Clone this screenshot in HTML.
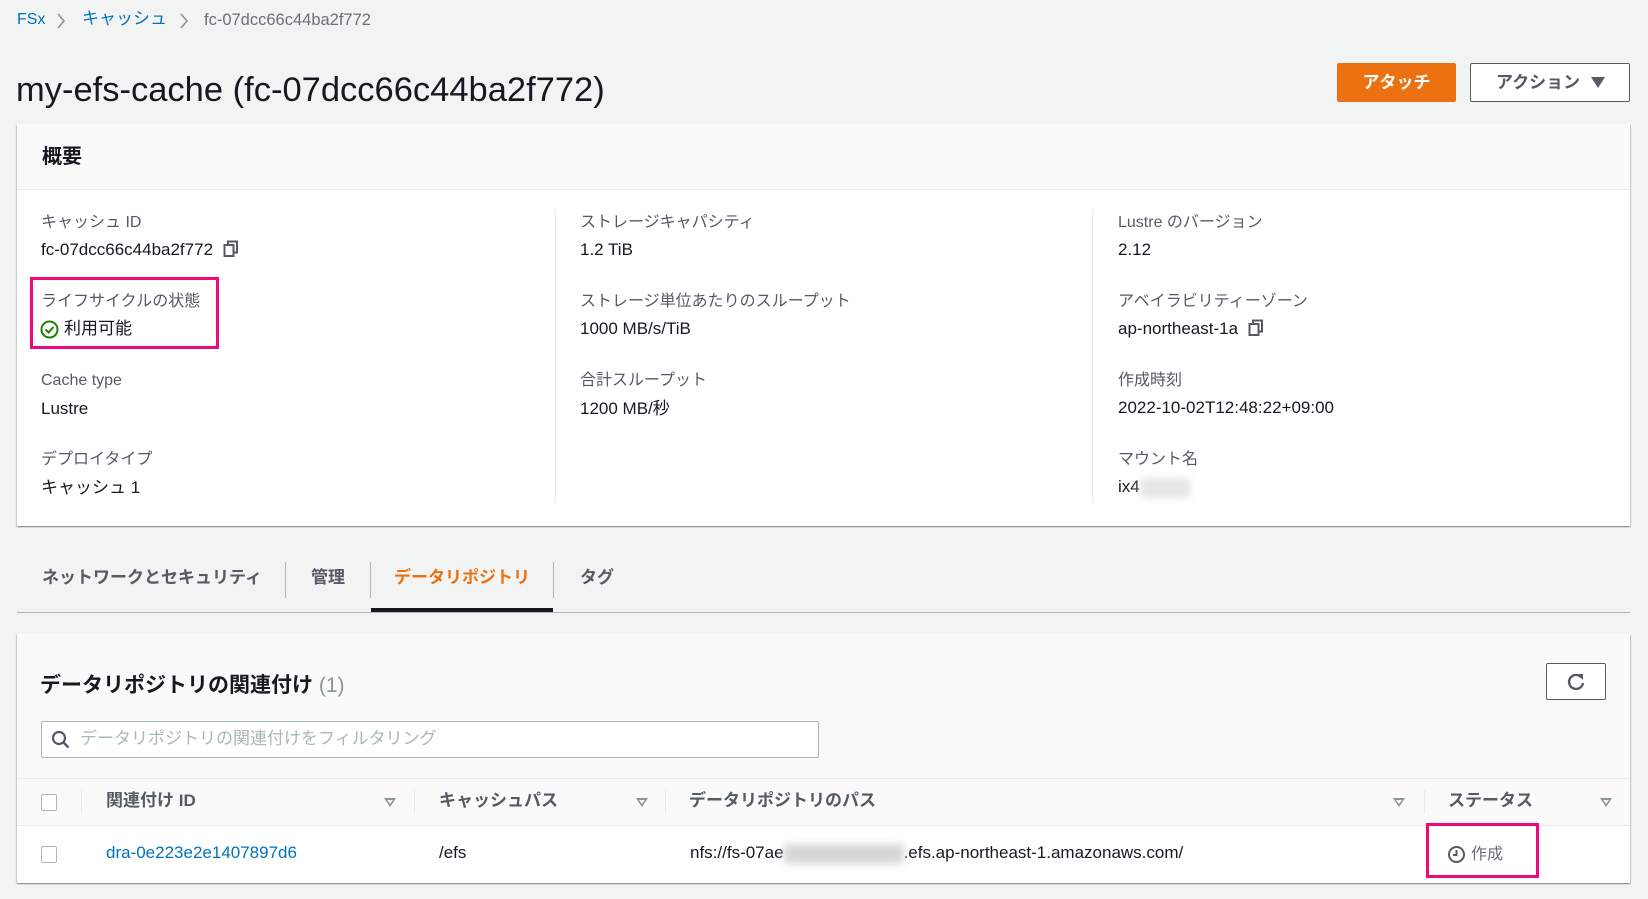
<!DOCTYPE html>
<html><head><meta charset="utf-8"><style>
*{box-sizing:border-box;margin:0;padding:0}
body{width:1648px;height:899px;background:#f2f3f3;font-family:"Liberation Sans","Noto Sans CJK JP",sans-serif;color:#16191f;position:relative;overflow:hidden;font-size:16px}
.a{position:absolute;white-space:nowrap;line-height:22px}
.lbl{color:#545b64;font-size:16px}
.val{color:#16191f;font-size:17px}
.link{color:#0073bb}
.vd{position:absolute;width:1px;background:#eaeded}
.blur{display:inline-block;vertical-align:middle;background:#d5d8d8;filter:blur(4px);border-radius:4px}
.cb{position:absolute;width:16px;height:17px;border:1.5px solid #aab7b8;border-radius:2px;background:#fff}
.th{font-weight:bold;color:#545b64;font-size:17px}
.sort{position:absolute;width:0;height:0;border-left:6px solid transparent;border-right:6px solid transparent;border-top:9px solid #879596}
.sort::after{content:"";position:absolute;left:-3px;top:-7px;border-left:3px solid transparent;border-right:3px solid transparent;border-top:4px solid #fafafa}
.cp{display:inline-block;vertical-align:-3px;margin-left:10px}
</style></head><body>
<div class="a link" style="left:17px;top:9px;font-size:16px">FSx</div>
<svg class="a" style="left:55px;top:12px" width="12" height="18"><path d="M3 2l6 7-6 7" stroke="#879596" stroke-width="1.6" fill="none"/></svg>
<div class="a link" style="left:82px;top:8px;font-size:17px">キャッシュ</div>
<svg class="a" style="left:178px;top:12px" width="12" height="18"><path d="M3 2l6 7-6 7" stroke="#879596" stroke-width="1.6" fill="none"/></svg>
<div class="a" style="left:204px;top:9px;font-size:16.5px;color:#687078">fc-07dcc66c44ba2f772</div>

<div class="a" style="left:16px;top:70px;font-size:34.5px;line-height:40px;color:#16191f">my-efs-cache (fc-07dcc66c44ba2f772)</div>
<div class="a" style="left:1337px;top:63px;width:119px;height:39px;background:#ec7211;border-radius:2px;color:#fff;font-weight:bold;font-size:17px;text-align:center;line-height:39px">アタッチ</div>
<div class="a" style="left:1470px;top:63px;width:160px;height:39px;background:#fff;border:1px solid #545b64;border-radius:2px;color:#545b64;font-weight:bold;font-size:17px;line-height:37px;padding-left:25px">アクション <svg style="margin-left:6px;vertical-align:0" width="14" height="11"><path d="M0 0h14L7 11z" fill="#545b64"/></svg></div>

<!-- overview -->
<div class="a" style="left:17px;top:124px;width:1613px;height:402px;background:#fff;box-shadow:0 1px 1px rgba(0,28,36,.3),1px 1px 1px rgba(0,28,36,.15),-1px 1px 1px rgba(0,28,36,.15)"></div>
<div class="a" style="left:17px;top:124px;width:1613px;height:66px;background:#fafafa;border-bottom:1px solid #eaeded"></div>
<div class="a" style="left:42px;top:146px;font-size:20px;font-weight:bold">概要</div>
<div class="vd" style="left:555px;top:210px;height:292px"></div>
<div class="vd" style="left:1092px;top:210px;height:292px"></div>

<div class="a lbl" style="left:41px;top:212px">キャッシュ ID</div>
<div class="a val" style="left:41px;top:239px">fc-07dcc66c44ba2f772<svg class="cp" width="16" height="18"><rect x="5" y="1.5" width="9" height="11" fill="none" stroke="#545b64" stroke-width="2"/><rect x="1.5" y="5" width="9" height="11" fill="#fff" stroke="#545b64" stroke-width="2"/></svg></div>
<div class="a" style="left:30px;top:277px;width:189px;height:72px;border:3px solid #f0097a"></div>
<div class="a lbl" style="left:41px;top:291px">ライフサイクルの状態</div>
<svg class="a" style="left:40px;top:320px" width="19" height="19"><circle cx="9.5" cy="9.5" r="8" fill="none" stroke="#1d8102" stroke-width="2"/><path d="M5.5 9.5l3 3 5-5.5" fill="none" stroke="#1d8102" stroke-width="2"/></svg>
<div class="a val" style="left:64px;top:318px">利用可能</div>
<div class="a lbl" style="left:41px;top:370px">Cache type</div>
<div class="a val" style="left:41px;top:398px">Lustre</div>
<div class="a lbl" style="left:41px;top:449px">デプロイタイプ</div>
<div class="a val" style="left:41px;top:477px">キャッシュ 1</div>

<div class="a lbl" style="left:580px;top:212px">ストレージキャパシティ</div>
<div class="a val" style="left:580px;top:239px">1.2 TiB</div>
<div class="a lbl" style="left:580px;top:291px">ストレージ単位あたりのスループット</div>
<div class="a val" style="left:580px;top:318px">1000 MB/s/TiB</div>
<div class="a lbl" style="left:580px;top:370px">合計スループット</div>
<div class="a val" style="left:580px;top:398px">1200 MB/秒</div>

<div class="a lbl" style="left:1118px;top:212px">Lustre のバージョン</div>
<div class="a val" style="left:1118px;top:239px">2.12</div>
<div class="a lbl" style="left:1118px;top:291px">アベイラビリティーゾーン</div>
<div class="a val" style="left:1118px;top:318px">ap-northeast-1a<svg class="cp" width="16" height="18"><rect x="5" y="1.5" width="9" height="11" fill="none" stroke="#545b64" stroke-width="2"/><rect x="1.5" y="5" width="9" height="11" fill="#fff" stroke="#545b64" stroke-width="2"/></svg></div>
<div class="a lbl" style="left:1118px;top:370px">作成時刻</div>
<div class="a val" style="left:1118px;top:397px">2022-10-02T12:48:22+09:00</div>
<div class="a lbl" style="left:1118px;top:449px">マウント名</div>
<div class="a val" style="left:1118px;top:476px">ix4<span class="blur" style="width:50px;height:20px;background:#e4e6e6"></span></div>

<!-- tabs -->
<div class="a" style="left:42px;top:567px;font-size:17px;font-weight:bold;color:#545b64">ネットワークとセキュリティ</div>
<div class="vd" style="left:285px;top:562px;height:36px;background:#aab7b8"></div>
<div class="a" style="left:311px;top:567px;font-size:17px;font-weight:bold;color:#545b64">管理</div>
<div class="vd" style="left:370px;top:562px;height:36px;background:#aab7b8"></div>
<div class="a" style="left:394px;top:567px;font-size:17px;font-weight:bold;color:#ec7211">データリポジトリ</div>
<div class="vd" style="left:553px;top:562px;height:36px;background:#aab7b8"></div>
<div class="a" style="left:580px;top:567px;font-size:17px;font-weight:bold;color:#545b64">タグ</div>
<div class="a" style="left:17px;top:612px;width:1613px;height:1px;background:#aab7b8"></div>
<div class="a" style="left:371px;top:608px;width:182px;height:4px;background:#16191f"></div>

<!-- second panel -->
<div class="a" style="left:17px;top:634px;width:1613px;height:249px;background:#fafafa;box-shadow:0 1px 1px rgba(0,28,36,.3),1px 1px 1px rgba(0,28,36,.15),-1px 1px 1px rgba(0,28,36,.15)"></div>
<div class="a" style="left:40px;top:672px;font-size:21px;line-height:28px;font-weight:bold">データリポジトリの関連付け <span style="font-weight:normal;color:#879596">(1)</span></div>
<div class="a" style="left:1546px;top:663px;width:60px;height:37px;border:1px solid #545b64;border-radius:2px;background:#fff"></div>
<svg class="a" style="left:1565px;top:671px" width="22" height="22"><path d="M16.5 6.5A7 7 0 1 0 18 12" fill="none" stroke="#545b64" stroke-width="2.4"/><path d="M12 3h6v6z" fill="#545b64"/></svg>
<div class="a" style="left:41px;top:721px;width:778px;height:37px;background:#fff;border:1px solid #aab7b8;border-radius:2px"></div>
<svg class="a" style="left:51px;top:730px" width="20" height="20"><circle cx="8" cy="8" r="6" fill="none" stroke="#545b64" stroke-width="2.2"/><path d="M12.5 12.5l5 5" stroke="#545b64" stroke-width="2.4"/></svg>
<div class="a" style="left:80px;top:728px;font-size:17px;color:#aab7b8">データリポジトリの関連付けをフィルタリング</div>

<div class="a" style="left:17px;top:778px;width:1613px;height:1px;background:#eaeded"></div>
<div class="a" style="left:17px;top:825px;width:1613px;height:58px;background:#fff;border-top:1px solid #eaeded"></div>
<div class="cb" style="left:41px;top:794px"></div>
<div class="vd" style="left:81px;top:790px;height:24px"></div>
<div class="a th" style="left:106px;top:790px">関連付け ID</div>
<div class="sort" style="left:384px;top:798px"></div>
<div class="vd" style="left:414px;top:790px;height:24px"></div>
<div class="a th" style="left:439px;top:790px">キャッシュパス</div>
<div class="sort" style="left:636px;top:798px"></div>
<div class="vd" style="left:665px;top:790px;height:24px"></div>
<div class="a th" style="left:689px;top:790px">データリポジトリのパス</div>
<div class="sort" style="left:1393px;top:798px"></div>
<div class="vd" style="left:1424px;top:790px;height:24px"></div>
<div class="a th" style="left:1448px;top:790px">ステータス</div>
<div class="sort" style="left:1600px;top:798px"></div>

<div class="cb" style="left:41px;top:846px"></div>
<div class="a link" style="left:106px;top:842px;font-size:17px">dra-0e223e2e1407897d6</div>
<div class="a val" style="left:439px;top:842px">/efs</div>
<div class="a val" style="left:690px;top:842px">nfs://fs-07ae<span class="blur" style="width:120px;height:20px"></span>.efs.ap-northeast-1.amazonaws.com/</div>
<div class="a" style="left:1426px;top:823px;width:113px;height:55px;border:3px solid #f0097a"></div>
<svg class="a" style="left:1447px;top:845px" width="19" height="19"><circle cx="9.5" cy="9.5" r="7.5" fill="none" stroke="#545b64" stroke-width="2"/><path d="M9.5 5v5H6" fill="none" stroke="#545b64" stroke-width="2"/></svg>
<div class="a" style="left:1471px;top:844px;font-size:16px;color:#687078">作成</div>
</body></html>
